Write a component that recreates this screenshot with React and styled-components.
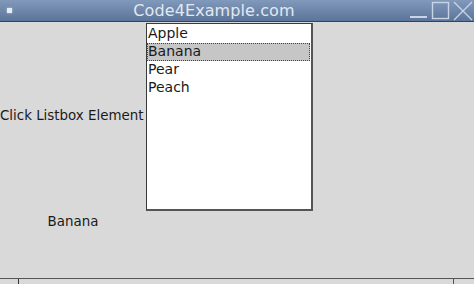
import styled, { createGlobalStyle } from "styled-components";

const Global = createGlobalStyle`
  html, body {
    margin: 0;
    padding: 0;
    width: 474px;
    height: 284px;
    overflow: hidden;
    background: #d9d9d9;
  }
`;

const Window = styled.div`
  width: 474px;
  height: 284px;
  display: flex;
  flex-direction: column;
  background: #d9d9d9;
  font-family: "DejaVu Sans", "Liberation Sans", sans-serif;
  color: #1a1a1a;
`;

const TitleBar = styled.div`
  height: 21px;
  flex: none;
  display: flex;
  align-items: center;
  background: linear-gradient(#8199bb, #5b7499);
  border-bottom: 1px solid #34445a;
`;

const MenuDot = styled.div`
  width: 5px;
  height: 5px;
  margin-left: 7px;
  background: #e6ecf4;
  box-shadow: 0 0 2px #c8d4e6;
`;

const Title = styled.div`
  flex: 1;
  text-align: center;
  font-size: 16px;
  color: #e2e8f1;
  margin-left: 7px;
  letter-spacing: 0.1px;
`;

const Controls = styled.div`
  display: flex;
  align-items: center;
  gap: 2px;
  margin-right: 1px;
`;

const Body = styled.div`
  flex: 1;
  display: grid;
  grid-template-columns: 146px 167px;
  grid-template-rows: 188px 20px;
  align-content: start;
  padding-top: 1px;
`;

const Label = styled.div`
  font-size: 13.4px;
  display: flex;
  align-items: center;
  justify-content: ${(p) => (p.$center ? "center" : "flex-start")};
  padding-bottom: ${(p) => (p.$center ? "0" : "4px")};
  white-space: nowrap;
`;

const ListBox = styled.div`
  background: #fff;
  border: 1px solid #3a3a3a;
  border-right-width: 2px;
  border-bottom-width: 2px;
  border-right-color: #555;
  border-bottom-color: #555;
  padding-top: 1px;
`;

const Item = styled.div`
  height: 18px;
  line-height: 17px;
  font-size: 14px;
  padding-left: 1px;
  box-sizing: border-box;
  background: ${(p) => (p.$selected ? "#c6c6c6" : "transparent")};
  outline: ${(p) => (p.$selected ? "1px dotted #444" : "none")};
  outline-offset: -1px;
  margin-right: 1px;
`;

const Spacer = styled.div`
  flex: 1;
`;

const Footer = styled.div`
  height: 5px;
  flex: none;
  border-top: 1px solid #555;
  display: flex;
`;

const FooterCell = styled.div`
  flex: 1;
  margin: 0 20px 0 18px;
  border-left: 1px solid #333;
  border-right: 1px solid #555;
`;

const items = ["Apple", "Banana", "Pear", "Peach"];

export default function App() {
  const selected = "Banana";
  return (
    <Window>
      <Global />
      <TitleBar>
        <MenuDot />
        <Title>Code4Example.com</Title>
        <Controls>
          <svg width="20" height="20" viewBox="0 0 20 20">
            <rect x="1" y="15" width="17" height="2" fill="#c9d4e4" />
          </svg>
          <svg width="20" height="20" viewBox="0 0 20 20">
            <rect x="1.5" y="1.5" width="16" height="16" fill="none" stroke="#c9d4e4" strokeWidth="1.4" />
          </svg>
          <svg width="20" height="20" viewBox="0 0 20 20">
            <path d="M1 1 L19 19 M19 1 L1 19" stroke="#c9d4e4" strokeWidth="1.3" />
          </svg>
        </Controls>
      </TitleBar>
      <Body>
        <Label>Click Listbox Element</Label>
        <ListBox>
          {items.map((it) => (
            <Item key={it} $selected={it === selected}>
              {it}
            </Item>
          ))}
        </ListBox>
        <Label $center>{selected}</Label>
      </Body>
      <Spacer />
      <Footer>
        <FooterCell />
      </Footer>
    </Window>
  );
}
